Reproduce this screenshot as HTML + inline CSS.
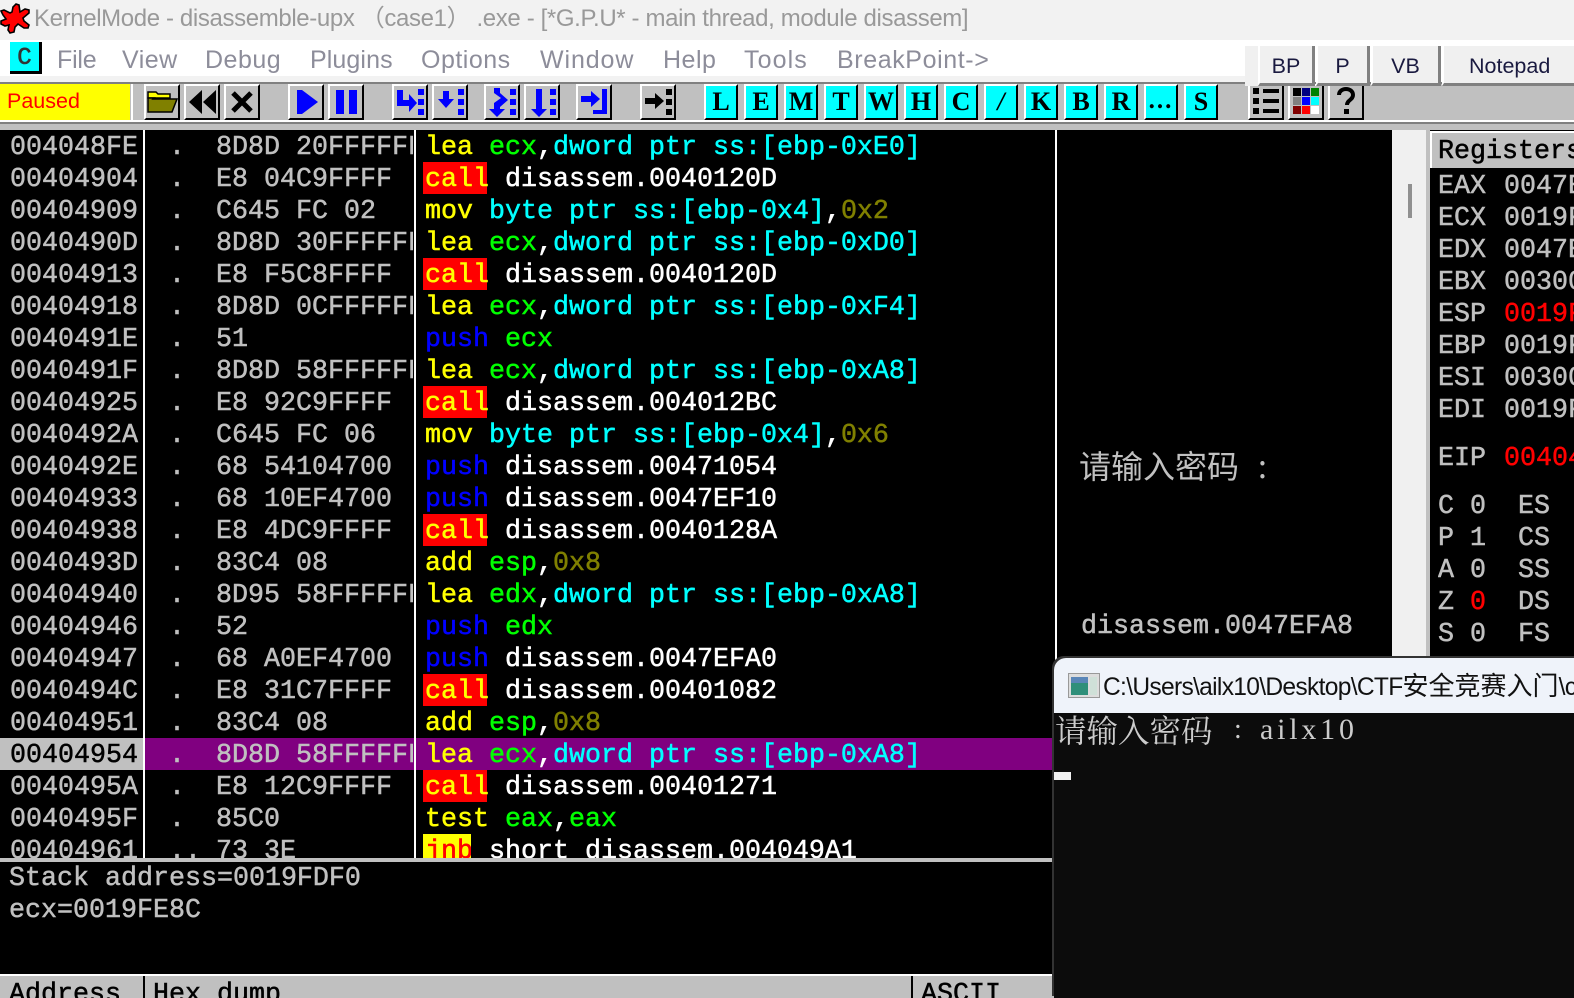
<!DOCTYPE html>
<html><head><meta charset="utf-8"><style>
html,body{margin:0;padding:0;background:#000}
#p{position:relative;width:1574px;height:998px;overflow:hidden;background:#000;font-family:"Liberation Mono","Noto Sans CJK SC",monospace;font-size:26.67px;line-height:36px;color:#c0c0c0}
#p div{position:absolute;white-space:pre}
.r{left:0;width:1054px;height:32px}
.a{left:10px;width:132px;overflow:hidden;-webkit-text-stroke:.5px currentColor}
.t{left:169px;-webkit-text-stroke:.5px currentColor}
.h{left:216px;width:197px;overflow:hidden;-webkit-text-stroke:.5px currentColor}
.i{left:425px;-webkit-text-stroke:.5px currentColor}
.y{color:#ff0}.g{color:#0f0}.c{color:#0ff}.w{color:#fff}.o{color:#808000}.b{color:#00f}.e{color:#f00}
.cl{background:#f00;color:#ff0;display:inline-block;height:32px;vertical-align:top;margin-left:-2px;margin-right:2px;padding-left:2px;width:62px}
.jn{background:#ff0;color:#f00;display:inline-block;height:32px;vertical-align:top;margin-left:-2px;margin-right:2px;padding-left:2px;width:46px;overflow:hidden}
.sq{background:#c0c0c0;border-style:solid;border-width:2px;border-color:#fff #000 #000 #fff;box-sizing:border-box;top:84px;height:36px;width:36px}
.sq svg{position:absolute;left:0;top:0;width:32px;height:32px}
.l{background:#0ff;color:#000;font:bold 26px/32px "Liberation Serif",serif;text-align:center;width:34px}
.m{top:42px;font:25px/36px "Liberation Sans",sans-serif;color:#8d8d9a;letter-spacing:.5px}
.v{left:1438px;width:136px;height:36px;overflow:hidden;-webkit-text-stroke:.5px currentColor}
.tb{top:46px;height:40px;background:#f0f0f0;border-left:2px solid #fff;border-right:3px solid #808080;border-bottom:3px solid #808080;box-sizing:border-box;font:21.5px/41px "Liberation Sans",sans-serif;color:#1a1a40;text-align:center}
</style></head><body><div id="p">
<div style="left:0;top:0;width:1574px;height:40px;background:#f2f2f2"></div>
<svg style="position:absolute;left:0;top:3px" width="30" height="32" viewBox="0 0 30 32"><path d="M16 1l3 1 1 7 5-3 4 1v3l-6 5 1 3 5 4-1 3-4 0-6-4-3 3-1 5-4 1-2-3 1-5-4 1-4-2 0-3 5-2-3-4-2-4 3-1 6 3 2-1 1-5z" fill="#f00" stroke="#000" stroke-width="1.6"/></svg>
<div style="left:34px;top:1px;font:24px/36px 'Liberation Sans','Noto Sans CJK SC',sans-serif;color:#999;letter-spacing:-.37px">KernelMode - disassemble-upx （case1） .exe - [*G.P.U* - main thread, module disassem]</div>

<div style="left:0;top:40px;width:1574px;height:42px;background:#fff"></div>
<div style="left:0;top:76px;width:1250px;height:6px;background:#f2f2f2"></div>
<div style="left:10px;top:42px;width:32px;height:32px;background:#0ff;border-right:3px solid #000;border-bottom:3px solid #000;box-sizing:border-box;font:24px/34px 'Liberation Mono',monospace;-webkit-text-stroke:.6px #333;color:#333;text-align:center">C</div>
<div class="m" style="left:57px;letter-spacing:-.2px">File</div>
<div class="m" style="left:122px">View</div>
<div class="m" style="left:205px">Debug</div>
<div class="m" style="left:310px;letter-spacing:.1px">Plugins</div>
<div class="m" style="left:421px">Options</div>
<div class="m" style="left:540px;letter-spacing:.9px">Window</div>
<div class="m" style="left:663px">Help</div>
<div class="m" style="left:744px;letter-spacing:1.1px">Tools</div>
<div class="m" style="left:837px;letter-spacing:.6px">BreakPoint-&gt;</div>

<div style="left:0;top:82px;width:1574px;height:48px;background:#c0c0c0"></div>
<div style="left:0;top:82px;width:1574px;height:2px;background:#808080"></div>
<div style="left:0;top:120px;width:1574px;height:2px;background:#fff"></div>
<div style="left:0;top:122px;width:1574px;height:2px;background:#808080"></div>
<div style="left:131px;top:84px;width:2px;height:38px;background:#fff"></div>
<div style="left:0;top:84px;width:130px;height:36px;background:#ff0;color:#f00;font:21.5px/34px 'Liberation Sans',sans-serif;text-indent:7px">Paused</div>

<div class="sq" style="left:144px"><svg viewBox="0 0 32 32"><path d="M2 6h8l2 2h12v4H2z" fill="#ff0" stroke="#000" stroke-width="1.5"/><path d="M2 26V12h6l-1 1h24l-5 13z" fill="#808000" stroke="#000" stroke-width="1.5"/></svg></div>
<div class="sq" style="left:184px"><svg viewBox="0 0 32 32"><path d="M16 4L3 16l13 12zM30 4L17 16l13 12z"/></svg></div>
<div class="sq" style="left:224px"><svg viewBox="0 0 32 32"><path d="M7 7l18 18M25 7L7 25" stroke="#000" stroke-width="5"/></svg></div>
<div class="sq" style="left:288px"><svg viewBox="0 0 32 32"><path d="M7 4v24h5l16-12L12 4z" fill="#00f"/></svg></div>
<div class="sq" style="left:328px"><svg viewBox="0 0 32 32"><path d="M6 4h8v24H6zM19 4h8v24h-8z" fill="#00f"/></svg></div>
<div class="sq" style="left:392px"><svg viewBox="0 0 32 32"><path d="M3 4h6v10h6V8l8 9-8 9v-6H3z" fill="#00f"/><path d="M24 3h6v6h-6zM24 13h6v6h-6zM24 23h6v6h-6z" fill="#00f"/></svg></div>
<div class="sq" style="left:432px"><svg viewBox="0 0 32 32"><path d="M9 5h6v8h5l-8 9-8-9h5z" fill="#00f"/><path d="M24 3h6v6h-6zM24 13h6v6h-6zM24 23h6v6h-6z" fill="#00f"/></svg></div>
<div class="sq" style="left:484px"><svg viewBox="0 0 32 32"><path d="M8 2h6v5l8 7-8 7v2h5l-8 8-8-8h5v-6l7-5-7-5z" fill="#00f"/><path d="M24 3h6v6h-6zM24 13h6v6h-6zM24 23h6v6h-6z" fill="#00f"/></svg></div>
<div class="sq" style="left:524px"><svg viewBox="0 0 32 32"><path d="M10 3h6v20h5l-8 8-8-8h5z" fill="#00f"/><path d="M24 3h6v6h-6zM24 13h6v6h-6zM24 23h6v6h-6z" fill="#00f"/></svg></div>
<div class="sq" style="left:576px"><svg viewBox="0 0 32 32"><path d="M3 10h10V5l9 8-9 8v-5H3zM24 3h5v25H15v-4h9z" fill="#00f"/></svg></div>
<div class="sq" style="left:640px"><svg viewBox="0 0 32 32"><path d="M3 12h10V7l9 8-9 8v-5H3z"/><path d="M24 3h6v6h-6zM24 13h6v6h-6zM24 23h6v6h-6z"/></svg></div>

<div class="sq l" style="left:704px">L</div>
<div class="sq l" style="left:744px">E</div>
<div class="sq l" style="left:784px">M</div>
<div class="sq l" style="left:824px">T</div>
<div class="sq l" style="left:864px">W</div>
<div class="sq l" style="left:904px">H</div>
<div class="sq l" style="left:944px">C</div>
<div class="sq l" style="left:984px"><span style="font-style:italic">/</span></div>
<div class="sq l" style="left:1024px">K</div>
<div class="sq l" style="left:1064px">B</div>
<div class="sq l" style="left:1104px">R</div>
<div class="sq l" style="left:1144px;letter-spacing:2px;font-size:25px;line-height:30px">...</div>
<div class="sq l" style="left:1184px">S</div>
<div class="sq" style="left:1248px"><svg viewBox="0 0 32 32"><path d="M3 2h6v6H3zM3 12h6v6H3zM3 22h6v6H3zM13 3h16v4H13zM13 13h16v4H13zM13 23h16v4H13z"/></svg></div>
<div class="sq" style="left:1288px"><svg viewBox="0 0 32 32"><path fill="#000" d="M3 2h8v8H3z"/><path fill="#000080" d="M12 2h8v8h-8z"/><path fill="#008000" d="M21 2h8v8h-8z"/><path fill="#808080" d="M3 11h8v8H3z"/><path fill="#00f" d="M12 11h8v8h-8z"/><path fill="#0ff" d="M21 11h8v8h-8z"/><path fill="#800000" d="M3 20h8v8H3z"/><path fill="#f00" d="M12 20h8v8h-8z"/><path fill="#fff" d="M21 20h8v8h-8z"/></svg></div>
<div class="sq" style="left:1328px"><svg viewBox="0 0 32 32"><path d="M9 9c0-8 14-8 14 0 0 5-6 5-6 10" fill="none" stroke="#000" stroke-width="4"/><path d="M14 23h5v5h-5z"/></svg></div>

<div style="left:1245px;top:46px;width:13px;height:40px;background:#f0f0f0"></div>
<div class="tb" style="left:1258px;width:57px">BP</div>
<div class="tb" style="left:1316px;width:54px">P</div>
<div class="tb" style="left:1371px;width:70px">VB</div>
<div class="tb" style="left:1442px;width:140px;text-align:left;text-indent:25px">Notepad</div>

<div style="left:143px;top:130px;width:2px;height:728px;background:#fff"></div>
<div style="left:414px;top:130px;width:2px;height:728px;background:#fff"></div>
<div style="left:1055px;top:130px;width:2px;height:530px;background:#fff"></div>

<div style="left:0;top:738px;width:143px;height:32px;background:#c0c0c0"></div>
<div style="left:145px;top:738px;width:269px;height:32px;background:#800080"></div>
<div style="left:416px;top:738px;width:640px;height:32px;background:#800080"></div>

<div style="left:0;top:130px;width:1055px;height:728px;overflow:hidden;background:none">
<div class="r" style="top:0"><div class="a">004048FE</div><div class="t">.</div><div class="h">8D8D 20FFFFFF</div><div class="i"><span class="y">lea</span> <span class="g">ecx</span><span class="w">,</span><span class="c">dword ptr ss:[ebp-0xE0]</span></div></div>
<div class="r" style="top:32px"><div class="a">00404904</div><div class="t">.</div><div class="h">E8 04C9FFFF</div><div class="i"><span class="cl">call</span> <span class="w">disassem.0040120D</span></div></div>
<div class="r" style="top:64px"><div class="a">00404909</div><div class="t">.</div><div class="h">C645 FC 02</div><div class="i"><span class="y">mov</span> <span class="c">byte ptr ss:[ebp-0x4]</span><span class="w">,</span><span class="o">0x2</span></div></div>
<div class="r" style="top:96px"><div class="a">0040490D</div><div class="t">.</div><div class="h">8D8D 30FFFFFF</div><div class="i"><span class="y">lea</span> <span class="g">ecx</span><span class="w">,</span><span class="c">dword ptr ss:[ebp-0xD0]</span></div></div>
<div class="r" style="top:128px"><div class="a">00404913</div><div class="t">.</div><div class="h">E8 F5C8FFFF</div><div class="i"><span class="cl">call</span> <span class="w">disassem.0040120D</span></div></div>
<div class="r" style="top:160px"><div class="a">00404918</div><div class="t">.</div><div class="h">8D8D 0CFFFFFF</div><div class="i"><span class="y">lea</span> <span class="g">ecx</span><span class="w">,</span><span class="c">dword ptr ss:[ebp-0xF4]</span></div></div>
<div class="r" style="top:192px"><div class="a">0040491E</div><div class="t">.</div><div class="h">51</div><div class="i"><span class="b">push</span> <span class="g">ecx</span></div></div>
<div class="r" style="top:224px"><div class="a">0040491F</div><div class="t">.</div><div class="h">8D8D 58FFFFFF</div><div class="i"><span class="y">lea</span> <span class="g">ecx</span><span class="w">,</span><span class="c">dword ptr ss:[ebp-0xA8]</span></div></div>
<div class="r" style="top:256px"><div class="a">00404925</div><div class="t">.</div><div class="h">E8 92C9FFFF</div><div class="i"><span class="cl">call</span> <span class="w">disassem.004012BC</span></div></div>
<div class="r" style="top:288px"><div class="a">0040492A</div><div class="t">.</div><div class="h">C645 FC 06</div><div class="i"><span class="y">mov</span> <span class="c">byte ptr ss:[ebp-0x4]</span><span class="w">,</span><span class="o">0x6</span></div></div>
<div class="r" style="top:320px"><div class="a">0040492E</div><div class="t">.</div><div class="h">68 54104700</div><div class="i"><span class="b">push</span> <span class="w">disassem.00471054</span></div></div>
<div class="r" style="top:352px"><div class="a">00404933</div><div class="t">.</div><div class="h">68 10EF4700</div><div class="i"><span class="b">push</span> <span class="w">disassem.0047EF10</span></div></div>
<div class="r" style="top:384px"><div class="a">00404938</div><div class="t">.</div><div class="h">E8 4DC9FFFF</div><div class="i"><span class="cl">call</span> <span class="w">disassem.0040128A</span></div></div>
<div class="r" style="top:416px"><div class="a">0040493D</div><div class="t">.</div><div class="h">83C4 08</div><div class="i"><span class="y">add</span> <span class="g">esp</span><span class="w">,</span><span class="o">0x8</span></div></div>
<div class="r" style="top:448px"><div class="a">00404940</div><div class="t">.</div><div class="h">8D95 58FFFFFF</div><div class="i"><span class="y">lea</span> <span class="g">edx</span><span class="w">,</span><span class="c">dword ptr ss:[ebp-0xA8]</span></div></div>
<div class="r" style="top:480px"><div class="a">00404946</div><div class="t">.</div><div class="h">52</div><div class="i"><span class="b">push</span> <span class="g">edx</span></div></div>
<div class="r" style="top:512px"><div class="a">00404947</div><div class="t">.</div><div class="h">68 A0EF4700</div><div class="i"><span class="b">push</span> <span class="w">disassem.0047EFA0</span></div></div>
<div class="r" style="top:544px"><div class="a">0040494C</div><div class="t">.</div><div class="h">E8 31C7FFFF</div><div class="i"><span class="cl">call</span> <span class="w">disassem.00401082</span></div></div>
<div class="r" style="top:576px"><div class="a">00404951</div><div class="t">.</div><div class="h">83C4 08</div><div class="i"><span class="y">add</span> <span class="g">esp</span><span class="w">,</span><span class="o">0x8</span></div></div>
<div class="r" style="top:608px"><div class="a" style="color:#000">00404954</div><div class="t">.</div><div class="h">8D8D 58FFFFFF</div><div class="i"><span class="y">lea</span> <span class="g">ecx</span><span class="w">,</span><span class="c">dword ptr ss:[ebp-0xA8]</span></div></div>
<div class="r" style="top:640px"><div class="a">0040495A</div><div class="t">.</div><div class="h">E8 12C9FFFF</div><div class="i"><span class="cl">call</span> <span class="w">disassem.00401271</span></div></div>
<div class="r" style="top:672px"><div class="a">0040495F</div><div class="t">.</div><div class="h">85C0</div><div class="i"><span class="y">test</span> <span class="g">eax</span><span class="w">,</span><span class="g">eax</span></div></div>
<div class="r" style="top:704px"><div class="a">00404961</div><div class="t">..</div><div class="h">73 3E</div><div class="i"><span class="jn">jnb</span> <span class="w">short disassem.004049A1</span></div></div>
</div>

<div style="left:0;top:858px;width:1054px;height:4px;background:#c0c0c0"></div>
<div style="left:9px;top:861px;-webkit-text-stroke:.5px #c0c0c0">Stack address=0019FDF0</div>
<div style="left:9px;top:893px;-webkit-text-stroke:.5px #c0c0c0">ecx=0019FE8C</div>
<div style="left:0;top:974px;width:1054px;height:24px;background:#c0c0c0;border-top:2px solid #fff;box-sizing:border-box"></div>
<div style="left:143px;top:976px;width:2px;height:22px;background:#000"></div>
<div style="left:911px;top:976px;width:2px;height:22px;background:#000"></div>
<div style="left:9px;top:977px;color:#000;-webkit-text-stroke:.5px #000">Address</div>
<div style="left:153px;top:977px;color:#000;-webkit-text-stroke:.5px #000">Hex dump</div>
<div style="left:921px;top:977px;color:#000;-webkit-text-stroke:.5px #000">ASCII</div>

<div style="left:1079px;top:447px;font:32px/36px 'Noto Sans CJK SC',sans-serif;color:#c0c0c0">请输入密码</div>
<div style="left:1258px;top:447px;font:32px/36px 'Noto Sans CJK SC',sans-serif;color:#c0c0c0">:</div>
<div style="left:1081px;top:609px;-webkit-text-stroke:.5px #c0c0c0">disassem.0047EFA8</div>

<div style="left:1392px;top:130px;width:34px;height:530px;background:#f0f0f0"></div>
<div style="left:1426px;top:130px;width:4px;height:530px;background:#c0c0c0"></div>
<div style="left:1408px;top:184px;width:4px;height:34px;background:#909090"></div>
<div style="left:1430px;top:131px;width:144px;height:37px;background:#c0c0c0;color:#000;border-top:2px solid #fff;border-left:2px solid #fff;box-sizing:border-box;-webkit-text-stroke:.5px #000;text-indent:6px;line-height:38px;overflow:hidden">Registers</div>

<div class="v" style="top:169px">EAX <span style="margin-left:2px">0047E</span></div>
<div class="v" style="top:201px">ECX <span style="margin-left:2px">0019F</span></div>
<div class="v" style="top:233px">EDX <span style="margin-left:2px">0047E</span></div>
<div class="v" style="top:265px">EBX <span style="margin-left:2px">00300</span></div>
<div class="v" style="top:297px">ESP <span class="e" style="margin-left:2px">0019F</span></div>
<div class="v" style="top:329px">EBP <span style="margin-left:2px">0019F</span></div>
<div class="v" style="top:361px">ESI <span style="margin-left:2px">00300</span></div>
<div class="v" style="top:393px">EDI <span style="margin-left:2px">0019F</span></div>
<div class="v" style="top:441px">EIP <span class="e" style="margin-left:2px">00404</span></div>
<div class="v" style="top:489px">C 0  ES</div>
<div class="v" style="top:521px">P 1  CS</div>
<div class="v" style="top:553px">A 0  SS</div>
<div class="v" style="top:585px">Z <span class="e">0</span>  DS</div>
<div class="v" style="top:617px">S 0  FS</div>

<div style="left:1054px;top:658px;width:530px;height:340px;background:#0c0c0c;border-radius:12px 0 0 0;box-shadow:-2px -2px 0 #333"></div>
<div style="left:1054px;top:658px;width:520px;height:55px;background:#eff3fa;border-radius:12px 0 0 0"></div>
<svg style="position:absolute;left:1068px;top:673px" width="32" height="25" viewBox="0 0 32 25"><rect x=".5" y=".5" width="31" height="24" fill="#ddd" stroke="#999"/><rect x="3" y="4" width="17" height="18" fill="#2f8f7a"/><rect x="3" y="4" width="17" height="6" fill="#5a86b8"/><rect x="22" y="4" width="7" height="18" fill="#cfe0d8"/></svg>
<div style="left:1103px;top:668px;font:24.6px/36px 'Liberation Sans','Noto Sans CJK SC',sans-serif;color:#111;width:471px;overflow:hidden;letter-spacing:-.7px">C:\Users\ailx10\Desktop\CTF<span style="letter-spacing:0;font-size:26px">安全竞赛入门</span>\ch</div>
<div style="left:1055px;top:712px;font:31.5px/36px 'Noto Serif CJK SC',serif;color:#ccc;width:165px">请输入密码</div>
<div style="left:1234px;top:712px;font:28px/36px 'Liberation Serif',serif;color:#ccc">:</div>
<div style="left:1260px;top:712px;font:30px/36px 'Liberation Serif',serif;color:#ccc;letter-spacing:3.8px">ailx10</div>
<div style="left:1054px;top:772px;width:17px;height:8px;background:#f2f2f2"></div>
</div></body></html>
